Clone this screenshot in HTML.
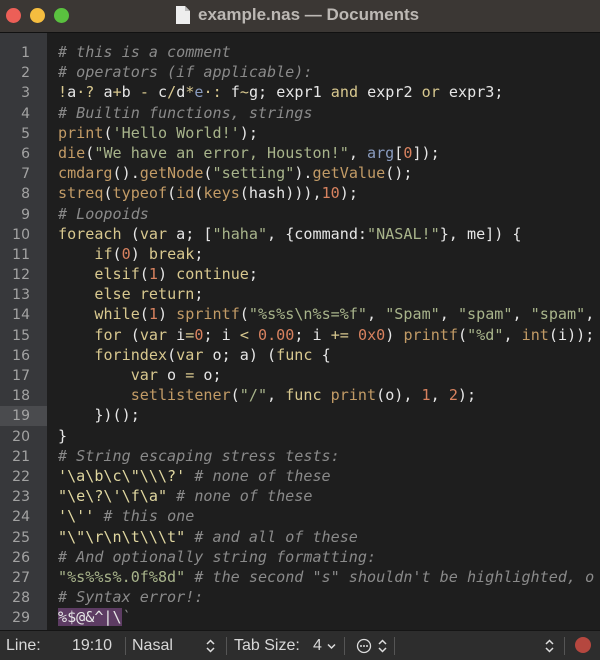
<!DOCTYPE html><html><head><style>
body{margin:0;width:600px;height:659px;overflow:hidden;background:#1e1e1e;font-family:"Liberation Sans",sans-serif;position:relative}
#tb{position:absolute;left:0;top:0;width:600px;height:32px;background:#3b3734;border-bottom:1px solid #111}
.dot{position:absolute;top:8px;width:15px;height:15px;border-radius:50%}
#title{position:absolute;left:198px;top:5px;color:#bcb8b4;font-weight:bold;font-size:17px}
#gut{position:absolute;left:0;top:33px;width:47px;height:597px;background:#37383b}
#code{position:absolute;left:0;top:42px;font-family:"DejaVu Sans Mono",monospace;font-size:15.1px;line-height:20.2px;color:#e6e6e6}
.l{position:relative;height:20.2px;white-space:pre}
.n{display:inline-block;width:30px;text-align:right;color:#a3a3a3;font-size:14px;font-family:"DejaVu Sans",sans-serif;margin-right:28px}
.c{color:#8a8a8a;font-style:italic}.k{color:#d8c88f}.f{color:#c29b66}.s{color:#a8b48b}.m{color:#d8825f}.b{color:#8a9cbf}.q{color:#e0d7a0}
#sb{position:absolute;left:0;top:630px;width:600px;height:29px;background:#2d2d2d;border-top:1px solid #151515;color:#d8d8d8;font-size:16px}
#sb span{position:absolute;top:6px}
.sep{position:absolute;top:6px;width:1px;height:18px;background:#555}
.ud{position:absolute;top:7px;width:9px;height:16px}
</style></head><body>
<div id="tb"><div class="dot" style="left:6px;background:#ec5f57"></div><div class="dot" style="left:30px;background:#f5bd3f"></div><div class="dot" style="left:54px;background:#5ac13f"></div>
<svg style="position:absolute;left:176px;top:6px" width="14" height="18"><path d="M0 0H9L14 5V18H0Z" fill="#eee"/><path d="M9 0V5H14" fill="#bbb"/></svg>
<div id="title">example.nas — Documents</div></div>
<div id="gut"></div>
<div style="position:absolute;left:0;top:406px;width:47px;height:20px;background:#4a4b4e"></div>
<div id="code"><div class="l"><span class="n">1</span><span class="c"># this is a comment</span></div><div class="l"><span class="n">2</span><span class="c"># operators (if applicable):</span></div><div class="l"><span class="n">3</span><span class="k">!</span>a<span class="k">·?</span> a<span class="k">+</span>b <span class="k">-</span> c<span class="k">/</span>d<span class="k">*</span><span class="b">e</span><span class="k">·:</span> f<span class="k">~</span>g; expr1 <span class="k">and</span> expr2 <span class="k">or</span> expr3;</div><div class="l"><span class="n">4</span><span class="c"># Builtin functions, strings</span></div><div class="l"><span class="n">5</span><span class="f">print</span>(<span class="s">'Hello World!'</span>);</div><div class="l"><span class="n">6</span><span class="f">die</span>(<span class="s">"We have an error, Houston!"</span>, <span class="b">arg</span>[<span class="m">0</span>]);</div><div class="l"><span class="n">7</span><span class="f">cmdarg</span>().<span class="f">getNode</span>(<span class="s">"setting"</span>).<span class="f">getValue</span>();</div><div class="l"><span class="n">8</span><span class="f">streq</span>(<span class="f">typeof</span>(<span class="f">id</span>(<span class="f">keys</span>(hash))),<span class="m">10</span>);</div><div class="l"><span class="n">9</span><span class="c"># Loopoids</span></div><div class="l"><span class="n">10</span><span class="k">foreach</span> (<span class="k">var</span> a; [<span class="s">"haha"</span>, {command:<span class="s">"NASAL!"</span>}, me]) {</div><div class="l"><span class="n">11</span>    <span class="k">if</span>(<span class="m">0</span>) <span class="k">break</span>;</div><div class="l"><span class="n">12</span>    <span class="k">elsif</span>(<span class="m">1</span>) <span class="k">continue</span>;</div><div class="l"><span class="n">13</span>    <span class="k">else</span> <span class="k">return</span>;</div><div class="l"><span class="n">14</span>    <span class="k">while</span>(<span class="m">1</span>) <span class="f">sprintf</span>(<span class="s">"%s%s\n%s=%f"</span>, <span class="s">"Spam"</span>, <span class="s">"spam"</span>, <span class="s">"spam"</span>,</div><div class="l"><span class="n">15</span>    <span class="k">for</span> (<span class="k">var</span> i<span class="k">=</span><span class="m">0</span>; i <span class="k">&lt;</span> <span class="m">0.00</span>; i <span class="k">+=</span> <span class="m">0x0</span>) <span class="f">printf</span>(<span class="s">"%d"</span>, <span class="f">int</span>(i));</div><div class="l"><span class="n">16</span>    <span class="k">forindex</span>(<span class="k">var</span> o; a) (<span class="k">func</span> {</div><div class="l"><span class="n">17</span>        <span class="k">var</span> o <span class="k">=</span> o;</div><div class="l"><span class="n">18</span>        <span class="f">setlistener</span>(<span class="s">"/"</span>, <span class="k">func</span> <span class="f">print</span>(o), <span class="m">1</span>, <span class="m">2</span>);</div><div class="l"><span class="n">19</span>    })();</div><div class="l"><span class="n">20</span>}</div><div class="l"><span class="n">21</span><span class="c"># String escaping stress tests:</span></div><div class="l"><span class="n">22</span><span class="q">'\a\b\c\"\\\?'</span> <span class="c"># none of these</span></div><div class="l"><span class="n">23</span><span class="q">"\e\?\'\f\a"</span> <span class="c"># none of these</span></div><div class="l"><span class="n">24</span><span class="q">'\''</span> <span class="c"># this one</span></div><div class="l"><span class="n">25</span><span class="q">"\"\r\n\t\\\t"</span> <span class="c"># and all of these</span></div><div class="l"><span class="n">26</span><span class="c"># And optionally string formatting:</span></div><div class="l"><span class="n">27</span><span class="s">"%s%%s%.0f%8d"</span> <span class="c"># the second "s" shouldn't be highlighted, o</span></div><div class="l"><span class="n">28</span><span class="c"># Syntax error!:</span></div><div class="l"><span class="n">29</span><span style="background:#5d3c63">%$@&amp;^|\</span><span class="c">`</span></div></div>
<div id="sb">
<span style="left:6px">Line:</span><span style="left:72px">19:10</span><div class="sep" style="left:125px"></div>
<span style="left:132px">Nasal</span>
<svg class="ud" style="left:206px" viewBox="0 0 9 16"><path d="M1 6L4.5 2.5L8 6M1 10L4.5 13.5L8 10" stroke="#ddd" stroke-width="1.5" fill="none"/></svg>
<div class="sep" style="left:226px"></div>
<span style="left:234px">Tab Size:</span><span style="left:313px">4</span>
<svg style="position:absolute;left:327px;top:12px" width="9" height="7"><path d="M1 1.5L4.5 5L8 1.5" stroke="#ddd" stroke-width="1.5" fill="none"/></svg>
<div class="sep" style="left:344px"></div>
<svg style="position:absolute;left:356px;top:7px" width="16" height="16"><circle cx="8" cy="8" r="6.5" stroke="#ddd" stroke-width="1.3" fill="none"/><circle cx="5" cy="8" r="1" fill="#ddd"/><circle cx="8" cy="8" r="1" fill="#ddd"/><circle cx="11" cy="8" r="1" fill="#ddd"/></svg>
<svg class="ud" style="left:378px" viewBox="0 0 9 16"><path d="M1 6L4.5 2.5L8 6M1 10L4.5 13.5L8 10" stroke="#ddd" stroke-width="1.5" fill="none"/></svg>
<div class="sep" style="left:394px"></div>
<svg class="ud" style="left:545px" viewBox="0 0 9 16"><path d="M1 6L4.5 2.5L8 6M1 10L4.5 13.5L8 10" stroke="#ddd" stroke-width="1.5" fill="none"/></svg>
<div class="sep" style="left:564px"></div>
<div style="position:absolute;left:575px;top:6px;width:16px;height:16px;border-radius:50%;background:#b5473f"></div>
</div>
</body></html>
